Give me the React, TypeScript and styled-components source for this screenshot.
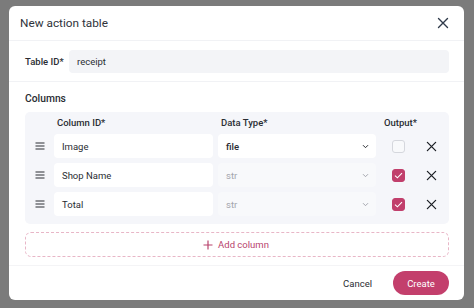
import React from "react";
import styled, { createGlobalStyle } from "styled-components";

const Global = createGlobalStyle`
  html, body { margin: 0; padding: 0; }
  body { background: #7b7b7b; font-family: Roboto, "Noto Sans", sans-serif; }
  * { box-sizing: border-box; }
`;

const Backdrop = styled.div`
  width: 474px;
  height: 308px;
  padding: 6px 10px 8px 9px;
  display: flex;
`;

const Dialog = styled.div`
  flex: 1;
  background: #fff;
  border-radius: 6px;
  display: flex;
  flex-direction: column;
  overflow: hidden;
`;

const Header = styled.div`
  height: 35px;
  display: flex;
  align-items: center;
  justify-content: space-between;
  padding: 0 15px 0 11px;
  border-bottom: 1px solid #f1f2f5;
`;

const Title = styled.div`
  font-size: 11.8px;
  color: #2f333b;
`;

const IconBtn = styled.div`
  display: flex;
  width: 12px;
  height: 12px;
  align-items: center;
  justify-content: center;
`;

const IdSection = styled.div`
  display: flex;
  align-items: center;
  padding: 9px 15px 8px 16px;
  border-bottom: 1px solid #f1f2f5;
`;

const Label = styled.div`
  font-size: 9.5px;
  font-weight: 500;
  color: #2a2d33;
  width: 44px;
`;

const TextBox = styled.div`
  flex: 1;
  height: 23px;
  background: #f3f4f7;
  border-radius: 4px;
  display: flex;
  align-items: center;
  padding-left: 8px;
  font-size: 9.5px;
  color: #2a2d33;
`;

const Body = styled.div`
  padding: 0 15px 0 16px;
  display: flex;
  flex-direction: column;
`;

const SectionTitle = styled.div`
  height: 30px;
  display: flex;
  align-items: center;
  padding-top: 2px;
  font-size: 10.3px;
  font-weight: 500;
  color: #2a2d33;
`;

const Panel = styled.div`
  background: #f5f6fa;
  border-radius: 5px;
  padding: 0 7px 8px 0;
  display: grid;
  grid-template-columns: 24px 159px 158px 34px 22px;
  grid-template-rows: 17px repeat(3, 24px);
  column-gap: 5px;
  row-gap: 5px;
  align-items: center;
`;

const HeadCell = styled.div`
  font-size: 9.5px;
  font-weight: 500;
  color: #2a2d33;
  padding: 4px 0 0 3px;
`;

const Handle = styled.div`
  display: flex;
  align-items: center;
  justify-content: center;
  padding-left: 6px;
`;

const Field = styled.div`
  height: 24px;
  background: #fff;
  border-radius: 4px;
  display: flex;
  align-items: center;
  padding-left: 8px;
  font-size: 9.5px;
  color: #2a2d33;
`;

const Select = styled.div<{ $muted?: boolean }>`
  height: 24px;
  background: ${(p) => (p.$muted ? "#f8f9fb" : "#fff")};
  border-radius: 4px;
  display: flex;
  align-items: center;
  justify-content: space-between;
  padding: 0 7px 0 8px;
  font-size: 9.5px;
  color: ${(p) => (p.$muted ? "#a3a6ad" : "#2a2d33")};
  font-weight: ${(p) => (p.$muted ? 400 : 500)};
`;

const CheckCell = styled.div`
  display: flex;
  justify-content: center;
`;

const Check = styled.div<{ $on?: boolean }>`
  width: 13px;
  height: 13px;
  border-radius: 3px;
  border: 1px solid ${(p) => (p.$on ? "#c13f6c" : "#d5d7dd")};
  background: ${(p) => (p.$on ? "#c13f6c" : "#f8f9fb")};
  display: flex;
  align-items: center;
  justify-content: center;
`;

const AddBtn = styled.div`
  margin-top: 8px;
  height: 25px;
  border: 1px dashed #e8b6c7;
  border-radius: 6px;
  display: flex;
  align-items: center;
  justify-content: center;
  gap: 5px;
  font-size: 9.5px;
  color: #b8436d;
  padding-right: 2px;
`;

const Footer = styled.div`
  margin-top: 8px;
  border-top: 1px solid #f4f4f6;
  flex: 1;
  display: flex;
  align-items: center;
  justify-content: flex-end;
  padding: 0 15px 0 0;
  gap: 21px;
`;

const TextButton = styled.div`
  font-size: 9.5px;
  color: #2a2d33;
`;

const Primary = styled.div`
  width: 56px;
  height: 24px;
  border-radius: 12px;
  background: #c33f6c;
  color: #fff;
  font-size: 9.5px;
  display: flex;
  align-items: center;
  justify-content: center;
`;

const Close = ({ size = 12, sw = 1.5, color = "#2f333b" }: { size?: number; sw?: number; color?: string }) => (
  <svg width={size} height={size} viewBox="0 0 12 12">
    <path d="M1.5 1.5L10.5 10.5M10.5 1.5L1.5 10.5" stroke={color} strokeWidth={sw} strokeLinecap="round" />
  </svg>
);

const Menu = () => (
  <svg width="10" height="8" viewBox="0 0 10 8">
    <path d="M0.5 1H9.5M0.5 4H9.5M0.5 7H9.5" stroke="#2a2d33" strokeWidth="1.2" />
  </svg>
);

const Chevron = ({ muted }: { muted?: boolean }) => (
  <svg width="7" height="5" viewBox="0 0 7 5">
    <path d="M1 1.2L3.5 3.7L6 1.2" stroke={muted ? "#a3a6ad" : "#2a2d33"} strokeWidth="1" fill="none" />
  </svg>
);

const Tick = () => (
  <svg width="9" height="7" viewBox="0 0 9 7">
    <path d="M1 3.6L3.4 5.8L8 1.2" stroke="#fff" strokeWidth="1.1" fill="none" />
  </svg>
);

const Plus = () => (
  <svg width="10" height="10" viewBox="0 0 10 10">
    <path d="M5 0.5V9.5M0.5 5H9.5" stroke="#b8436d" strokeWidth="1.2" />
  </svg>
);

const rows = [
  { id: "Image", type: "file", muted: false, out: false },
  { id: "Shop Name", type: "str", muted: true, out: true },
  { id: "Total", type: "str", muted: true, out: true },
];

export default function App() {
  return (
    <>
      <Global />
      <Backdrop>
        <Dialog>
          <Header>
            <Title>New action table</Title>
            <IconBtn>
              <Close size={12} sw={1.4} color="#2f3a4a" />
            </IconBtn>
          </Header>
          <IdSection>
            <Label>Table ID*</Label>
            <TextBox>receipt</TextBox>
          </IdSection>
          <Body>
            <SectionTitle>Columns</SectionTitle>
            <Panel>
              <div />
              <HeadCell>Column ID*</HeadCell>
              <HeadCell>Data Type*</HeadCell>
              <HeadCell>Output*</HeadCell>
              <div />
              {rows.map((r) => (
                <React.Fragment key={r.id}>
                  <Handle>
                    <Menu />
                  </Handle>
                  <Field>{r.id}</Field>
                  <Select $muted={r.muted}>
                    {r.type}
                    <Chevron muted={r.muted} />
                  </Select>
                  <CheckCell>
                    <Check $on={r.out}>{r.out && <Tick />}</Check>
                  </CheckCell>
                  <CheckCell>
                    <Close size={11} sw={1.4} color="#1f2228" />
                  </CheckCell>
                </React.Fragment>
              ))}
            </Panel>
            <AddBtn>
              <Plus />
              Add column
            </AddBtn>
          </Body>
          <Footer>
            <TextButton>Cancel</TextButton>
            <Primary>Create</Primary>
          </Footer>
        </Dialog>
      </Backdrop>
    </>
  );
}
